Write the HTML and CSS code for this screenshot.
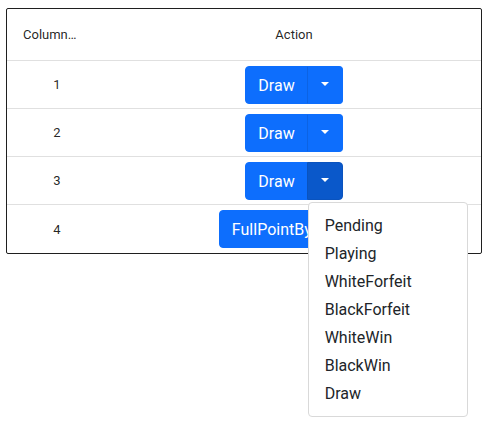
FILE: index.html
```html
<!DOCTYPE html>
<html lang="en">
<head>
<meta charset="utf-8">
<title>Grid</title>
<link rel="stylesheet" href="styles.css">
</head>
<body>
<div class="page">
  <div class="grid">
    <div class="row header">
      <div class="cell c1 head-left">Column…</div>
      <div class="cell c2">Action</div>
    </div>
    <div class="row">
      <div class="cell c1">1</div>
      <div class="cell c2">
        <div class="btn-group">
          <span class="btn main">Draw</span>
          <span class="btn toggle"><span class="caret"></span></span>
        </div>
      </div>
    </div>
    <div class="row">
      <div class="cell c1">2</div>
      <div class="cell c2">
        <div class="btn-group">
          <span class="btn main">Draw</span>
          <span class="btn toggle"><span class="caret"></span></span>
        </div>
      </div>
    </div>
    <div class="row">
      <div class="cell c1">3</div>
      <div class="cell c2">
        <div class="btn-group">
          <span class="btn main">Draw</span>
          <span class="toggle-wrap">
            <span class="btn toggle active"><span class="caret"></span></span>
            <ul class="menu">
              <li>Pending</li>
              <li>Playing</li>
              <li>WhiteForfeit</li>
              <li>BlackForfeit</li>
              <li>WhiteWin</li>
              <li>BlackWin</li>
              <li>Draw</li>
            </ul>
          </span>
        </div>
      </div>
    </div>
    <div class="row last">
      <div class="cell c1">4</div>
      <div class="cell c2">
        <div class="btn-group">
          <span class="btn main wide">FullPointBye</span>
          <span class="btn toggle"><span class="caret"></span></span>
        </div>
      </div>
    </div>
  </div>
</div>
</body>
</html>
```

FILE: styles.css
```css
html, body {
  margin: 0;
  padding: 0;
  background: #ffffff;
  min-height: 100%;
}

html {
  height: 100%;
}

body {
  height: 100%;
  font-family: Roboto, "Liberation Sans", sans-serif;
  color: rgba(0, 0, 0, 0.87);
}

.page {
  padding: 8px 6px;
  min-height: 422px;
  box-sizing: border-box;
}

.grid {
  border: 1px solid #1f1f1f;
  border-radius: 2px;
  display: flex;
  flex-direction: column;
}

.row {
  display: grid;
  grid-template-columns: 100px 1fr;
  height: 48px;
  border-bottom: 1px solid #e0e0e0;
  box-sizing: border-box;
}

.row.header {
  height: 52px;
}

.row.last {
  border-bottom: none;
}

.cell {
  display: flex;
  align-items: center;
  justify-content: center;
  font-size: 13px;
  min-width: 0;
}

.head-left {
  justify-content: flex-start;
  padding-left: 16px;
}

.btn-group {
  display: inline-flex;
  position: relative;
}

.btn {
  display: inline-flex;
  align-items: center;
  justify-content: center;
  box-sizing: border-box;
  height: 38px;
  padding: 7px 12px 5px;
  font-size: 16px;
  line-height: 24px;
  color: #ffffff;
  background: #0d6efd;
  border: 1px solid #0d6efd;
  white-space: nowrap;
}

.main {
  border-radius: 4px 0 0 4px;
}

.main.wide {
  padding-right: 13px;
}

.toggle {
  width: 36px;
  padding: 0;
  margin-left: -1px;
  border-radius: 0 4px 4px 0;
  border-left-color: #0c63e4;
}

.toggle-wrap {
  position: relative;
  display: inline-flex;
}

.toggle.active {
  background: #0a58ca;
  border-color: #0a53be;
}

.caret {
  width: 0;
  height: 0;
  border-top: 4.8px solid #ffffff;
  border-left: 4.8px solid transparent;
  border-right: 4.8px solid transparent;
  margin-top: -2px;
}

.menu {
  position: absolute;
  z-index: 10;
  top: calc(100% + 2px);
  left: 0;
  margin: 0;
  padding: 9px 0 8px;
  list-style: none;
  min-width: 160px;
  box-sizing: border-box;
  background: #ffffff;
  border: 1px solid #d9d9d9;
  border-radius: 4px;
}

.menu li {
  padding: 2px 16px;
  font-size: 16px;
  line-height: 24px;
  color: #212529;
  white-space: nowrap;
}
```
